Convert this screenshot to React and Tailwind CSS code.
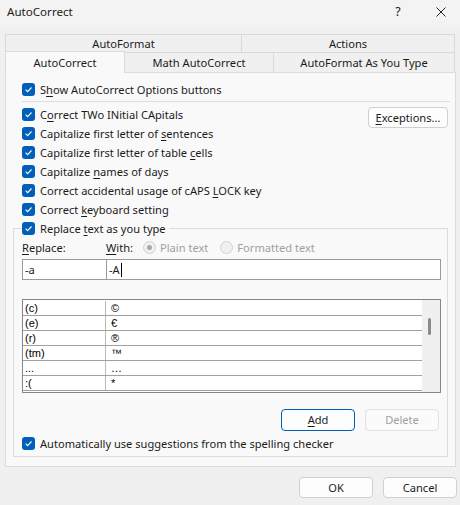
import React from 'react';

const U = ({ children }) => <span className="underline underline-offset-[2px] decoration-1">{children}</span>;

const Check = () => (
  <span className="w-[13px] h-[13px] rounded-[3px] bg-[#005fb8] flex items-center justify-center shrink-0">
    <svg width="9" height="9" viewBox="0 0 9 9">
      <path d="M1.6 4.7 L3.6 6.6 L7.5 2.5" fill="none" stroke="white" strokeWidth="1.1" />
    </svg>
  </span>
);

const CheckRow = ({ children }) => (
  <div className="flex items-center gap-[5px] h-[19px]">
    <Check />
    <span className="whitespace-nowrap">{children}</span>
  </div>
);

const Radio = ({ on, children }) => (
  <div className="flex items-center gap-[4px] text-[#a0a0a0]">
    <span className="w-[13px] h-[13px] rounded-full border border-[#d0d0d0] bg-[#f0f0f0] flex items-center justify-center">
      {on && <span className="w-[5px] h-[5px] rounded-full bg-[#a8a8a8]" />}
    </span>
    <span>{children}</span>
  </div>
);

const Btn = ({ children, className = '' }) => (
  <div className={`flex items-center justify-center rounded-[4px] border ${className}`}>{children}</div>
);

const ROWS = [
  ['(c)', '©'],
  ['(e)', '€'],
  ['(r)', '®'],
  ['(tm)', '™'],
  ['...', '…'],
  [':(', '*'],
];

export default function App() {
  return (
    <div className="w-[460px] h-[505px] bg-[#f0f0f0] text-[11.1px] leading-[16px] text-[#1b1b1b] font-['Segoe_UI','Noto_Sans',sans-serif] overflow-hidden">
      {/* title bar */}
      <div className="h-[27px] bg-[#f3f3f3] flex items-start pt-[4px] pl-[7px] text-[11.6px]">
        <span className="flex-1">AutoCorrect</span>
        <span className="w-[10px] text-center mr-[33px] text-[12.5px]">?</span>
        <svg width="10" height="10" viewBox="0 0 10 10" className="mt-[3px] mr-[14px]">
          <path d="M0.5 0.5 L9.5 9.5 M9.5 0.5 L0.5 9.5" stroke="#222" strokeWidth="1" />
        </svg>
      </div>

      {/* tabs */}
      <div className="mt-[7px] ml-[5px] w-[450px]">
        <div className="flex h-[18px]">
          <div className="w-[237px] border border-b-0 border-[#d9d9d9] flex items-center justify-center">AutoFormat</div>
          <div className="flex-1 border border-l-0 border-b-0 border-[#d9d9d9] flex items-center justify-center">Actions</div>
        </div>
        <div className="flex items-end h-[20px]">
          <div className="relative z-10 -mb-px h-[22px] w-[120px] border border-b-0 border-[#d9d9d9] bg-[#f9f9f9] flex items-center justify-center">AutoCorrect</div>
          <div className="h-[20px] w-[149px] border-t border-r border-[#d9d9d9] flex items-center justify-center">Math AutoCorrect</div>
          <div className="h-[20px] flex-1 border-t border-r border-[#d9d9d9] flex items-center justify-center">AutoFormat As You Type</div>
        </div>
      </div>

      {/* panel */}
      <div className="ml-[5px] w-[451px] border border-[#dcdcdc] bg-[#f9f9f9] pt-[7px] pb-[9px]">
        <div className="pl-[16px]">
          <CheckRow>S<U>h</U>ow AutoCorrect Options buttons</CheckRow>
        </div>
        <div className="ml-[16px] mr-[5px] mt-[2px] h-px bg-[#dedede]" />
        <div className="mt-[3px] pl-[16px] pr-[7px] flex justify-between">
          <div className="flex flex-col">
            <CheckRow>C<U>o</U>rrect TWo INitial CApitals</CheckRow>
            <CheckRow>Capitalize first letter of <U>s</U>entences</CheckRow>
            <CheckRow>Capitalize first letter of table <U>c</U>ells</CheckRow>
            <CheckRow>Capitalize <U>n</U>ames of days</CheckRow>
            <CheckRow>Correct accidental usage of cAPS <U>L</U>OCK key</CheckRow>
            <CheckRow>Correct <U>k</U>eyboard setting</CheckRow>
          </div>
          <Btn className="mt-[2px] w-[80px] h-[21px] border-[#d0d0d0] bg-[#fdfdfd]">
            <span><U>E</U>xceptions...</span>
          </Btn>
        </div>

        <fieldset className="mx-[7px] border border-[#dcdcdc] pl-[8px] pr-[6px] pb-[3px]">
          <legend className="pr-[3px]">
            <CheckRow>Replace <U>t</U>ext as you type</CheckRow>
          </legend>

          <div className="flex items-center h-[19px]">
            <span className="w-[84px]"><U>R</U>eplace:</span>
            <span className="w-[37px]"><U>W</U>ith:</span>
            <Radio on>Plain text</Radio>
            <div className="ml-[12px]">
              <Radio>Formatted text</Radio>
            </div>
          </div>

          <div className="mt-[2px] flex h-[21px] border border-[#9a9a9a] bg-white">
            <div className="w-[84px] border-r border-[#9a9a9a] pl-[2px] flex items-center">-a</div>
            <div className="flex-1 pl-[2px] flex items-center">
              -A<span className="ml-px w-px h-[14px] bg-black" />
            </div>
          </div>

          <div className="mt-[19px] h-[94px] border border-[#828790] bg-white flex font-['Liberation_Sans',sans-serif] text-[11px] leading-[14px] text-black">
            <div className="flex-1 pt-px">
              {ROWS.map(([k, v]) => (
                <div key={k} className="flex h-[15px] border-b border-[#a0a0a0]">
                  <div className="w-[83px] border-r border-[#b8b8b8] pl-[2px]">{k}</div>
                  <div className="flex-1 pl-[5px]">{v}</div>
                </div>
              ))}
            </div>
            <div className="w-[18px] bg-[#f0f0f0]">
              <div className="mt-[18px] ml-[6px] w-[3px] h-[17px] rounded-full bg-[#8a8a8a]" />
            </div>
          </div>

          <div className="mt-[16px] flex justify-end gap-[10px] pr-[2px]">
            <Btn className="w-[74px] h-[22px] border-[#005fb8] bg-[#fdfdfd]">
              <span><U>A</U>dd</span>
            </Btn>
            <Btn className="w-[74px] h-[22px] border-[#e0e0e0] bg-[#fbfbfb] text-[#a0a0a0]">Delete</Btn>
          </div>

          <div className="mt-[3px]">
            <CheckRow>Automatically use su<U>g</U>gestions from the spelling checker</CheckRow>
          </div>
        </fieldset>
      </div>

      {/* footer */}
      <div className="mt-[10px] flex justify-end gap-[10px] pr-[3px]">
        <Btn className="w-[74px] h-[21px] border-[#d0d0d0] bg-[#fdfdfd]">OK</Btn>
        <Btn className="w-[74px] h-[21px] border-[#d0d0d0] bg-[#fdfdfd]">Cancel</Btn>
      </div>
    </div>
  );
}
